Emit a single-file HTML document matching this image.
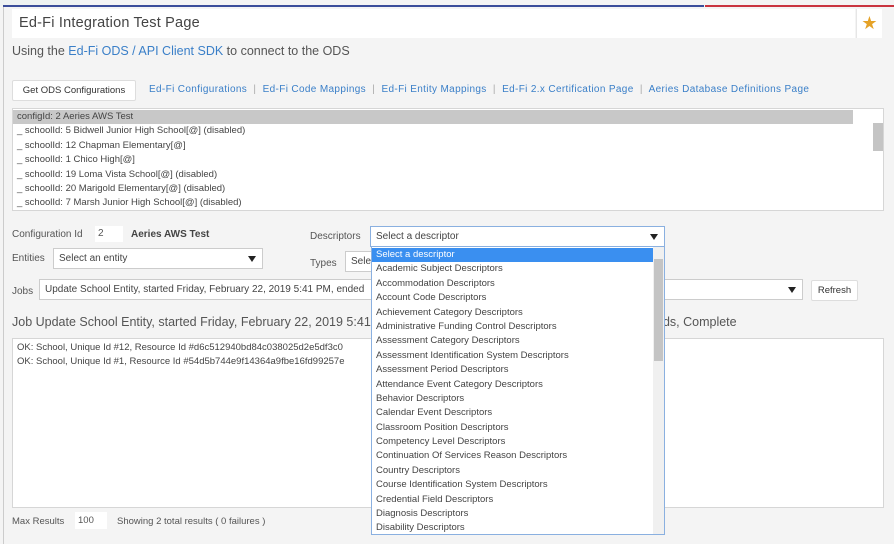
<!DOCTYPE html>
<html><head><style>
*{box-sizing:border-box;margin:0;padding:0}
body{width:894px;height:544px;background:#f4f4f4;font-family:"Liberation Sans",sans-serif;color:#555;position:relative;overflow:hidden;font-size:10px}
.a{position:absolute;white-space:nowrap}
a{color:#3a7fc8;text-decoration:none}
.box{position:absolute;background:#fff;border:1px solid #d6d6d6}
.sel{position:absolute;background:#fff;border:1px solid #ccc;padding:0 5px;line-height:20px;font-size:10px;color:#444}
.tri{position:absolute;right:6px;top:7px;width:0;height:0;border-left:4px solid transparent;border-right:4px solid transparent;border-top:6px solid #222}
.lb div{height:14.4px;line-height:14.4px;padding-left:4px;font-size:9.5px;color:#444}
</style></head><body>
<div class="a" style="left:0;top:0;width:80px;height:6px;background:#eef2f2"></div>
<div class="a" style="left:3px;top:6px;width:1px;height:538px;background:#ccc"></div>
<div class="a" style="left:3px;top:5px;width:261px;height:2px;background:#3b4d9a"></div>
<div class="a" style="left:264px;top:5px;width:440px;height:2px;background:#3b4d9a"></div>
<div class="a" style="left:705px;top:5px;width:189px;height:2px;background:#c9343f"></div>
<div class="a" style="left:12px;top:9px;width:843px;height:29px;background:#fff"></div>
<div class="a" style="left:856px;top:9px;width:26px;height:29px;background:#fff;border-left:1px solid #e6e6e6;color:#e5a227;font-size:18px;text-align:center;line-height:28px">★</div>
<div class="a" style="left:19px;top:15px;font-size:14.5px;color:#444;letter-spacing:0.2px">Ed-Fi Integration Test Page</div>
<div class="a" style="left:12px;top:44px;font-size:12.5px;color:#555">Using the <a>Ed-Fi ODS / API Client SDK</a> to connect to the ODS</div>
<div class="a" style="left:12px;top:80px;width:124px;height:21px;background:#fff;border:1px solid #ddd;border-radius:2px;font-size:9.5px;color:#333;text-align:center;line-height:19px">Get ODS Configurations</div>
<div class="a" style="left:149px;top:84px;font-size:10px;letter-spacing:0.35px;color:#aaa"><a>Ed-Fi Configurations</a> &nbsp;|&nbsp; <a>Ed-Fi Code Mappings</a> &nbsp;|&nbsp; <a>Ed-Fi Entity Mappings</a> &nbsp;|&nbsp; <a>Ed-Fi 2.x Certification Page</a> &nbsp;|&nbsp; <a>Aeries Database Definitions Page</a></div>
<div class="box lb" style="left:12px;top:108px;width:872px;height:103px;padding-top:1px;overflow:hidden">
<div style="background:#c8c8c8;width:840px">configId: 2 Aeries AWS Test</div>
<div>_ schoolId: 5 Bidwell Junior High School[@] (disabled)</div>
<div>_ schoolId: 12 Chapman Elementary[@]</div>
<div>_ schoolId: 1 Chico High[@]</div>
<div>_ schoolId: 19 Loma Vista School[@] (disabled)</div>
<div>_ schoolId: 20 Marigold Elementary[@] (disabled)</div>
<div>_ schoolId: 7 Marsh Junior High School[@] (disabled)</div>
<div class="a" style="left:860px;top:14px;width:10px;height:28px;background:#c4c4c4"></div>
</div>
<div class="a" style="left:12px;top:229px;font-size:10px">Configuration Id</div>
<div class="a" style="left:95px;top:226px;width:28px;height:16px;background:#fff;padding-left:3px;line-height:16px;font-size:10px">2</div>
<div class="a" style="left:131px;top:229px;font-size:10px;font-weight:bold;color:#444">Aeries AWS Test</div>
<div class="a" style="left:12px;top:253px">Entities</div>
<div class="sel" style="left:53px;top:248px;width:210px;height:21px">Select an entity<span class="tri"></span></div>
<div class="a" style="left:310px;top:231px">Descriptors</div>
<div class="sel" style="left:370px;top:226px;width:295px;height:21px;border-color:#8ab0e0">Select a descriptor<span class="tri"></span></div>
<div class="a" style="left:310px;top:258px">Types</div>
<div class="sel" style="left:345px;top:251px;width:30px;height:21px">Sele</div>
<div class="a" style="left:12px;top:286px">Jobs</div>
<div class="sel" style="left:39px;top:279px;width:764px;height:21px">Update School Entity, started Friday, February 22, 2019 5:41 PM, ended<span class="tri"></span></div>
<div class="a" style="left:811px;top:280px;width:47px;height:21px;background:#fff;border:1px solid #ddd;border-radius:2px;font-size:9.5px;color:#333;text-align:center;line-height:19px">Refresh</div>
<div class="a" style="left:12px;top:315px;font-size:12.5px;color:#555">Job Update School Entity, started Friday, February 22, 2019 5:41 PM</div>
<div class="a" style="left:656px;top:315px;font-size:12.5px;color:#555">nds, Complete</div>
<div class="box" style="left:12px;top:338px;width:872px;height:170px"></div>
<div class="a" style="left:17px;top:341px;font-size:9.5px;color:#444;line-height:14.4px">OK: School, Unique Id #12, Resource Id #d6c512940bd84c038025d2e5df3c0<br>OK: School, Unique Id #1, Resource Id #54d5b744e9f14364a9fbe16fd99257e</div>
<div class="a" style="left:12px;top:516px;font-size:9.5px">Max Results</div>
<div class="a" style="left:75px;top:512px;width:32px;height:17px;background:#fff;padding-left:3px;line-height:17px;font-size:9.5px">100</div>
<div class="a" style="left:117px;top:516px;font-size:9.5px">Showing 2 total results ( 0 failures )</div>
<div class="box lb" style="left:371px;top:246px;width:294px;height:289px;border-color:#8ab0e0;padding-top:1px;overflow:hidden">
<div style="background:#3a8ff0;color:#fff;width:281px">Select a descriptor</div>
<div>Academic Subject Descriptors</div><div>Accommodation Descriptors</div><div>Account Code Descriptors</div><div>Achievement Category Descriptors</div><div>Administrative Funding Control Descriptors</div><div>Assessment Category Descriptors</div><div>Assessment Identification System Descriptors</div><div>Assessment Period Descriptors</div><div>Attendance Event Category Descriptors</div><div>Behavior Descriptors</div><div>Calendar Event Descriptors</div><div>Classroom Position Descriptors</div><div>Competency Level Descriptors</div><div>Continuation Of Services Reason Descriptors</div><div>Country Descriptors</div><div>Course Identification System Descriptors</div><div>Credential Field Descriptors</div><div>Diagnosis Descriptors</div><div>Disability Descriptors</div>
<div class="a" style="left:281px;top:0;width:11px;height:289px;background:#f0f0f0"></div>
<div class="a" style="left:282px;top:12px;width:9px;height:102px;background:#c4c4c4"></div>
</div>
</body></html>
